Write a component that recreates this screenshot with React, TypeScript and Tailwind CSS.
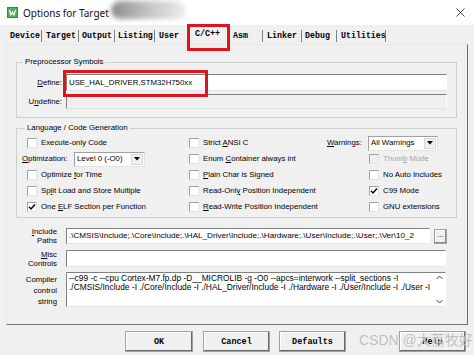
import React from 'react';

const tabs = [
  { label: 'Device', cls: 'w-[36px] pl-[4px] border-r border-[#808080]' },
  { label: 'Target', cls: 'w-[37px] pl-[4px] border-r border-[#808080]' },
  { label: 'Output', cls: 'w-[36px] pl-[3px] border-r border-[#808080]' },
  { label: 'Listing', cls: 'w-[40px] pl-[3px] border-r border-[#808080]' },
  { label: 'User', cls: 'w-[31px] pl-[4px]' },
  { label: 'C/C++', cls: 'w-[43px] pl-[9px] mb-[4px]' },
  { label: 'Asm', cls: 'w-[34px] pl-[4px] border-r border-[#808080]' },
  { label: 'Linker', cls: 'w-[39px] pl-[4px] border-r border-[#808080]' },
  { label: 'Debug', cls: 'w-[35px] pl-[3px] border-r border-[#808080]' },
  { label: 'Utilities', cls: 'w-[49px] pl-[4px] border-r border-[#808080]' },
];

function Check({ checked, disabled }: { checked?: boolean; disabled?: boolean }) {
  return (
    <span
      className={
        'flex h-[10px] w-[10px] shrink-0 items-center justify-center border border-t-[#a0a0a0] border-l-[#a0a0a0] border-b-[#e3e3e3] border-r-[#e3e3e3] ' +
        (disabled ? 'bg-[#f0f0f0]' : 'bg-white')
      }
    >
      {checked && (
        <svg width="8" height="8" viewBox="0 0 8 8">
          <path d="M1 3.8 L3 6 L7 1.5" fill="none" stroke="#000" strokeWidth="1.4" />
        </svg>
      )}
    </span>
  );
}

function CheckRow({
  children,
  checked,
  disabled,
}: {
  children: React.ReactNode;
  checked?: boolean;
  disabled?: boolean;
}) {
  return (
    <div className={'flex h-[16px] items-center gap-[4px] ' + (disabled ? 'text-[#a6a6a6]' : '')}>
      <Check checked={checked} disabled={disabled} />
      <span className="whitespace-nowrap">{children}</span>
    </div>
  );
}

function Select({ value, cls }: { value: string; cls: string }) {
  return (
    <div className={'flex h-[15px] items-center border border-[#a0a0a0] border-b-[#e3e3e3] border-r-[#e3e3e3] bg-white ' + cls}>
      <span className="flex-1 whitespace-nowrap pl-[2px]">{value}</span>
      <span className="mr-[1px] flex h-[11px] w-[12px] items-center justify-center border border-[#d8d8d8] bg-[#f0f0f0]">
        <svg width="6" height="4" viewBox="0 0 6 4">
          <path d="M0 0 H6 L3 3.5 Z" fill="#000" />
        </svg>
      </span>
    </div>
  );
}

function Btn({ children, cls }: { children: React.ReactNode; cls: string }) {
  return (
    <div
      className={
        "flex h-[21px] items-center justify-center border border-[#a0a0a0] bg-[#f0f0f0] font-['Liberation_Mono',monospace] text-[8.5px] font-bold shadow-[inset_-1px_-1px_0_#696969,inset_1px_1px_0_#ffffff] " +
        cls
      }
    >
      {children}
    </div>
  );
}

const U = ({ children }: { children: React.ReactNode }) => <span className="underline underline-offset-[1px]">{children}</span>;

export default function App() {
  return (
    <div className="relative h-[355px] w-[474px] overflow-hidden bg-[#f0f0f0] font-['Liberation_Sans',Arial,sans-serif] text-[7.8px] leading-[10px] text-black">
      {/* title bar */}
      <div className="flex h-[25px] items-center bg-white pl-[7px]">
        <svg width="11" height="11" viewBox="0 0 11 11" className="shrink-0">
          <rect width="11" height="11" fill="#2e8b3a" />
          <rect x="1" y="1" width="9" height="9" fill="#4fb25a" />
          <path d="M2.5 3 L4 8 L5.5 5 L7 8 L8.5 3" fill="none" stroke="#fff" strokeWidth="1.2" />
        </svg>
        <span className="ml-[5px] whitespace-nowrap font-['Noto_Sans',sans-serif] text-[10px] leading-[12px] text-[#111]">Options for Target</span>
        <div className="ml-[2px] mb-[5px] h-[18px] w-[75px] rounded-full bg-gradient-to-r from-[#8c8c8c] via-[#c4c4c4] to-[#eeeeee] blur-[2.5px]" />
        <svg width="9" height="9" viewBox="0 0 9 9" className="ml-auto mr-[9px]">
          <path d="M0.5 0.5 L8.5 8.5 M8.5 0.5 L0.5 8.5" stroke="#333" strokeWidth="0.9" />
        </svg>
      </div>

      {/* tabs */}
      <div className="flex h-[19px] items-end pl-[6px] font-['Liberation_Mono',monospace] text-[8.3px] font-bold">
        {tabs.map((t) => (
          <div key={t.label} className={'mb-[2px] flex h-[12px] shrink-0 items-center whitespace-nowrap ' + t.cls}>
            {t.label}
          </div>
        ))}
      </div>

      {/* panel */}
      <div className="ml-[6px] flex h-[281px] w-[462px] flex-col border border-l-[#e6e6e6] border-t-[#e6e6e6] border-r-[#6e6e6e] border-b-[#6e6e6e] pl-[9px] pr-[10px] pt-[12px]">
        <fieldset className="flex h-[61px] flex-col border border-[#cfcfcf] pr-[9px]">
          <legend className="ml-[6px] px-[2px]">Preprocessor Symbols</legend>
          <div className="mt-[7px] flex h-[17px] items-center gap-[4px]">
            <span className="w-[45px] text-right">
              <U>D</U>efine:
            </span>
            <div className="flex h-[17px] flex-1 items-center border border-t-[#808080] border-l-[#808080] border-b-[#e3e3e3] border-r-white bg-white pl-[2px]">
              USE_HAL_DRIVER,STM32H750xx
            </div>
          </div>
          <div className="mt-[3px] flex h-[15px] items-center gap-[4px]">
            <span className="w-[45px] text-right">
              U<U>n</U>define:
            </span>
            <div className="h-[15px] flex-1 border border-t-[#808080] border-l-[#808080] border-b-[#e3e3e3] border-r-white bg-[#f0f0f0]" />
          </div>
        </fieldset>

        <fieldset className="mt-[5px] flex h-[95px] border border-[#cfcfcf] pt-[2px]">
          <legend className="ml-[8px] px-[2px]">Language / Code Generation</legend>
          <div className="flex w-[172px] flex-col">
            <div className="pl-[10px]">
              <CheckRow>Execute-only Code</CheckRow>
            </div>
            <div className="flex h-[16px] items-center pl-[5px]">
              <span className="w-[52px] whitespace-nowrap">
                <U>O</U>ptimization:
              </span>
              <Select value="Level 0 (-O0)" cls="w-[71px]" />
            </div>
            <div className="pl-[10px]">
              <CheckRow>
                Optimize <U>f</U>or Time
              </CheckRow>
              <CheckRow>
                Sp<U>l</U>it Load and Store Multiple
              </CheckRow>
              <CheckRow checked>
                One <U>E</U>LF Section per Function
              </CheckRow>
            </div>
          </div>
          <div className="flex w-[138px] flex-col">
            <CheckRow>
              Strict <U>A</U>NSI C
            </CheckRow>
            <CheckRow>
              Enum <U>C</U>ontainer always int
            </CheckRow>
            <CheckRow>
              <U>P</U>lain Char is Signed
            </CheckRow>
            <CheckRow>
              Read-Onl<U>y</U> Position Independent
            </CheckRow>
            <CheckRow>
              <U>R</U>ead-Write Position Independent
            </CheckRow>
          </div>
          <div className="flex flex-1 flex-col">
            <div className="flex h-[16px] items-center">
              <span className="w-[41px] whitespace-nowrap">
                <U>W</U>arnings:
              </span>
              <Select value="All Warnings" cls="w-[70px]" />
            </div>
            <div className="pl-[42px]">
              <CheckRow disabled>
                Thum<U>b</U> Mode
              </CheckRow>
              <CheckRow>No Auto Includes</CheckRow>
              <CheckRow checked>C99 Mode</CheckRow>
              <CheckRow>GNU extensions</CheckRow>
            </div>
          </div>
        </fieldset>

        <div className="mt-[10px] flex h-[16px] items-center">
          <div className="w-[41px] text-right leading-[9px]">
            <div>
              <U>I</U>nclude
            </div>
            <div>Paths</div>
          </div>
          <div className="ml-[9px] flex h-[16px] w-[364px] items-center overflow-hidden whitespace-nowrap border border-t-[#808080] border-l-[#808080] border-b-[#e3e3e3] border-r-white bg-white pl-[2px] text-[8.1px]">
            .\CMSIS\Include;.\Core\Include;.\HAL_Driver\Include;.\Hardware;.\User\Include;.\User;.\Ver\10_2
          </div>
          <div className="ml-[4px] flex h-[15px] w-[13px] items-start justify-center border border-[#a0a0a0] bg-[#f0f0f0] leading-[9px] shadow-[inset_-1px_-1px_0_#8a8a8a,inset_1px_1px_0_#ffffff]">
            ...
          </div>
        </div>

        <div className="mt-[6px] flex h-[17px] items-center">
          <div className="w-[41px] text-right leading-[9px]">
            <div>
              <U>M</U>isc
            </div>
            <div>Controls</div>
          </div>
          <div className="ml-[9px] h-[17px] w-[380px] border border-t-[#808080] border-l-[#808080] border-b-[#e3e3e3] border-r-white bg-white" />
        </div>

        <div className="mt-[5px] flex h-[35px] items-start">
          <div className="w-[41px] pt-[2px] text-right leading-[11px]">
            <div>Compiler</div>
            <div>control</div>
            <div>string</div>
          </div>
          <div className="ml-[9px] flex h-[35px] w-[380px] border border-t-[#808080] border-l-[#808080] border-b-[#e3e3e3] border-r-white bg-white">
            <div className="flex-1 overflow-hidden whitespace-nowrap pl-[2px] pt-[1px] text-[8.4px] leading-[9px]">
              <div>--c99 -c --cpu Cortex-M7.fp.dp -D__MICROLIB -g -O0 --apcs=interwork --split_sections -I</div>
              <div>./CMSIS/Include -I ./Core/Include -I ./HAL_Driver/Include -I ./Hardware -I ./User/Include -I ./User -I</div>
            </div>
            <div className="flex w-[12px] flex-col items-center justify-between py-[2px]">
              <svg width="7" height="5" viewBox="0 0 7 5">
                <path d="M0.5 4 L3.5 1 L6.5 4" fill="none" stroke="#444" strokeWidth="1" />
              </svg>
              <svg width="7" height="5" viewBox="0 0 7 5">
                <path d="M0.5 1 L3.5 4 L6.5 1" fill="none" stroke="#444" strokeWidth="1" />
              </svg>
            </div>
          </div>
        </div>
      </div>

      {/* buttons */}
      <div className="flex pt-[6px]">
        <Btn cls="ml-[125px] w-[68px]">OK</Btn>
        <Btn cls="ml-[10px] w-[67px]">Cancel</Btn>
        <Btn cls="ml-[9px] w-[67px]">Defaults</Btn>
        <Btn cls="ml-[53px] w-[67px]">Help</Btn>
      </div>

      {/* highlight boxes and watermark */}
      <div className="pointer-events-none absolute left-[187px] top-[24px] h-[27px] w-[43px] border-[3px] border-[#e0141c]" />
      <div className="pointer-events-none absolute left-[63px] top-[70px] h-[27px] w-[145px] border-[3px] border-[#e0141c]" />
      <div className="pointer-events-none absolute left-[359px] top-[331px] whitespace-nowrap font-['Liberation_Sans','Noto_Sans_CJK_SC',sans-serif] text-[14px] leading-[18px] text-[#b4b4b4]/90 [text-shadow:0_0_1px_#fff]">
        CSDN @大荔牧好
      </div>
    </div>
  );
}
